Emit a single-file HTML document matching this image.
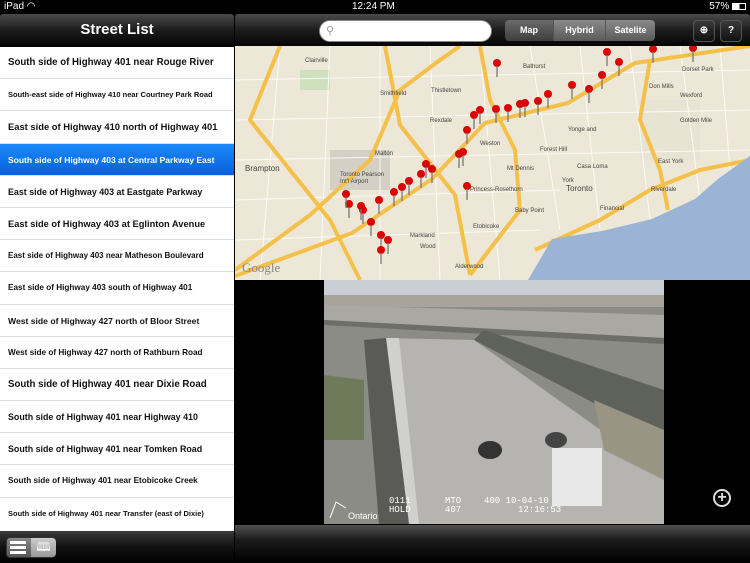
<!DOCTYPE html>
<html><head><meta charset="utf-8"><style>
*{margin:0;padding:0;box-sizing:border-box}
body{width:750px;height:563px;background:#000;position:relative;overflow:hidden;font-family:"Liberation Sans",sans-serif}
.status{position:absolute;top:0;left:0;width:750px;height:14px;background:#000;color:#fff;font-size:10px;line-height:14px}
.nav{position:absolute;top:14px;height:32px;background:linear-gradient(#4a4a4a,#1c1c1c 50%,#050505);}
.list{position:absolute;left:0;top:47px;width:234px;height:484px;background:#fff}
.row{height:32.2px;border-bottom:1px solid #ddd;font-weight:bold;color:#111;font-size:9.3px;line-height:32px;padding-left:8px;white-space:nowrap;overflow:hidden}
.row.s{font-size:7.5px}
.row.l{font-size:9.7px}
.row.sel{background:linear-gradient(#1a8af6,#0a5fe0);color:#fff}
.seg{position:absolute;top:20px;height:21px;font-size:9px;font-weight:bold;line-height:21px;text-align:center;color:#fff;background:linear-gradient(#8a8a8a,#5a5a5a)}
.btn{position:absolute;top:20px;width:22px;height:22px;border:1px solid #555;border-radius:4px;background:linear-gradient(#3a3a3a,#111);color:#fff;font-size:10px;font-weight:bold;text-align:center;line-height:20px}
</style></head><body>
<div class="status"><span style="position:absolute;left:4px">iPad &#x25E0;</span><span style="position:absolute;left:352px">12:24 PM</span><span style="position:absolute;right:4px">57% <span style="display:inline-block;width:14px;height:7px;border:1px solid #fff;vertical-align:-1px;background:linear-gradient(90deg,#fff 55%,#000 55%)"></span></span></div>
<div class="nav" style="left:0;width:234px;border-radius:3px 3px 0 0"><div style="color:#fff;font-weight:bold;font-size:15px;text-align:center;line-height:32px">Street List</div></div>
<div class="nav" style="left:235px;width:515px;border-radius:3px 3px 0 0"></div>
<div style="position:absolute;left:319px;top:20px;width:173px;height:22px;border-radius:11px;background:#fff;border:1px solid #888"><span style="position:absolute;left:6px;top:3px;color:#999;font-size:11px">&#x26B2;</span></div>
<div class="seg" style="left:505px;width:48px;border-radius:4px 0 0 4px;background:linear-gradient(#6a6a6a,#3e3e3e)">Map</div>
<div class="seg" style="left:553px;width:52px;border-left:1px solid #555">Hybrid</div>
<div class="seg" style="left:605px;width:50px;border-left:1px solid #555;border-radius:0 4px 4px 0">Satelite</div>
<div class="btn" style="left:693px">&#x2295;</div>
<div class="btn" style="left:720px">?</div>
<div class="list">
<div class="row l">South side of Highway 401 near Rouge River</div>
<div class="row s">South-east side of Highway 410 near Courtney Park Road</div>
<div class="row" style="font-size:9.4px">East side of Highway 410 north of Highway 401</div>
<div class="row sel" style="font-size:8.5px">South side of Highway 403 at Central Parkway East</div>
<div class="row" style="font-size:8.9px">East side of Highway 403 at Eastgate Parkway</div>
<div class="row" style="font-size:9.3px">East side of Highway 403 at Eglinton Avenue</div>
<div class="row" style="font-size:8px">East side of Highway 403 near Matheson Boulevard</div>
<div class="row" style="font-size:8.2px">East side of Highway 403 south of Highway 401</div>
<div class="row" style="font-size:8.6px">West side of Highway 427 north of Bloor Street</div>
<div class="row" style="font-size:8.2px">West side of Highway 427 north of Rathburn Road</div>
<div class="row l">South side of Highway 401 near Dixie Road</div>
<div class="row" style="font-size:8.9px">South side of Highway 401 near Highway 410</div>
<div class="row" style="font-size:8.9px">South side of Highway 401 near Tomken Road</div>
<div class="row" style="font-size:8.2px">South side of Highway 401 near Etobicoke Creek</div>
<div class="row" style="font-size:7.5px;border:none">South side of Highway 401 near Transfer (east of Dixie)</div>
</div>
<div style="position:absolute;left:0;top:531px;width:234px;height:32px;background:linear-gradient(#3a3a3a,#111 50%,#000)">
<div style="position:absolute;left:6px;top:6px;width:50px;height:21px;border-radius:4px;background:linear-gradient(#888,#555);border:1px solid #333"></div>
<div style="position:absolute;left:10px;top:10px;width:16px;height:3px;background:#fff;box-shadow:0 5px 0 #fff,0 10px 0 #fff"></div>
<div style="position:absolute;left:31px;top:7px;width:25px;height:19px;background:linear-gradient(#ccc,#999);border-radius:0 4px 4px 0;color:#fff;font-size:12px;text-align:center;line-height:19px">&#x1F56E;</div>
</div>
<div style="position:absolute;left:235px;top:525px;width:515px;height:38px;background:linear-gradient(#505050,#1a1a1a 40%,#000)"></div>
<svg style="position:absolute;left:235px;top:46px" width="515" height="234" viewBox="235 46 515 234">
<rect x="235" y="46" width="515" height="234" fill="#ece7d6"/>
<rect x="330" y="150" width="60" height="40" fill="#d4d0c6"/>
<rect x="300" y="70" width="30" height="20" fill="#cfe0bf"/>
<rect x="640" y="100" width="60" height="60" fill="#e8e4d4"/>
<g stroke="#fff" stroke-width="1" fill="none" opacity=".8">
<path d="M235 80L750 70M235 120L750 110M235 160L750 150M235 200L560 190M235 240L540 230M280 46L260 280M330 46L320 280M380 46L380 280M430 46L440 280M480 46L500 280M530 46L560 230M580 46L600 230M630 46L650 220M680 46L700 200M720 46L730 170"/>
</g>
<g stroke="#f5c04a" stroke-width="4" fill="none" stroke-linejoin="round">
<path d="M235 276L352 233L432 179L485 123L568 103L635 63L750 46"/>
<path d="M280 46L250 120L330 220L360 280"/>
<path d="M235 270L310 215L370 160L400 90L440 60L460 46"/>
<path d="M385 46L400 125L455 195L470 275"/>
<path d="M480 46L490 100L515 150L520 210L470 275"/>
<path d="M650 60L640 120L660 170L668 210"/>
<path d="M535 250L600 220L650 190L700 170L750 160"/>
</g>
<path d="M528 280L552 239L602 231L652 219L695 199L718 179L750 156L750 280Z" fill="#9bb3d4"/>
<g font-size="6" fill="#444" font-family="Liberation Sans">
<text x="245" y="171" font-size="8">Brampton</text><text x="566" y="191" font-size="8">Toronto</text>
<text x="305" y="62">Clairville</text><text x="380" y="95">Smithfield</text><text x="431" y="92">Thistletown</text>
<text x="430" y="122">Rexdale</text><text x="480" y="145">Weston</text><text x="375" y="155">Malton</text>
<text x="340" y="176">Toronto Pearson</text><text x="340" y="183">Int'l Airport</text><text x="470" y="191">Princess-Rosethorn</text>
<text x="515" y="212">Baby Point</text><text x="473" y="228">Etobicoke</text><text x="410" y="237">Markland</text>
<text x="420" y="248">Wood</text><text x="455" y="268">Alderwood</text><text x="540" y="151">Forest Hill</text>
<text x="568" y="131">Yonge and</text><text x="577" y="168">Casa Loma</text><text x="600" y="210">Financial</text>
<text x="649" y="88">Don Mills</text><text x="682" y="71">Dorset Park</text><text x="680" y="97">Wexford</text>
<text x="680" y="122">Golden Mile</text><text x="658" y="163">East York</text><text x="651" y="191">Riverdale</text>
<text x="523" y="68">Bathurst</text><text x="562" y="182">York</text><text x="507" y="170">Mt Dennis</text>
</g>
<text x="242" y="272" font-size="13" fill="#888" font-family="Liberation Serif">Google</text>
<g>
<g id="p" fill="#d00"><circle r="4"/><line y1="3" y2="14" stroke="#777" stroke-width="1.3"/></g>
<use href="#p" x="497" y="63"/><use href="#p" x="607" y="52"/><use href="#p" x="619" y="62"/><use href="#p" x="602" y="75"/><use href="#p" x="589" y="89"/><use href="#p" x="572" y="85"/><use href="#p" x="548" y="94"/><use href="#p" x="538" y="101"/><use href="#p" x="525" y="103"/><use href="#p" x="520" y="104"/><use href="#p" x="508" y="108"/><use href="#p" x="496" y="109"/><use href="#p" x="480" y="110"/><use href="#p" x="474" y="115"/><use href="#p" x="467" y="130"/><use href="#p" x="463" y="152"/><use href="#p" x="459" y="154"/><use href="#p" x="467" y="186"/><use href="#p" x="432" y="169"/><use href="#p" x="426" y="164"/><use href="#p" x="421" y="174"/><use href="#p" x="409" y="181"/><use href="#p" x="402" y="187"/><use href="#p" x="394" y="192"/><use href="#p" x="379" y="200"/><use href="#p" x="363" y="210"/><use href="#p" x="361" y="206"/><use href="#p" x="349" y="204"/><use href="#p" x="346" y="194"/><use href="#p" x="371" y="222"/><use href="#p" x="381" y="235"/><use href="#p" x="388" y="240"/><use href="#p" x="381" y="250"/><use href="#p" x="653" y="49"/><use href="#p" x="693" y="48"/>
</g>
</svg>
<svg style="position:absolute;left:324px;top:280px" width="340" height="244" viewBox="0 0 340 244">
<rect width="340" height="244" fill="#8c8c86"/>
<rect width="340" height="25" fill="#c9cfd4"/>
<rect y="15" width="340" height="12" fill="#a8a49c"/>
<path d="M0 25L340 35L340 58L0 40Z" fill="#a9a8a2"/>
<path d="M0 40L340 58L340 64L0 45Z" fill="#6e6e68"/>
<path d="M160 50L340 110L340 160L150 60Z" fill="#5e625a"/>
<path d="M0 95L40 100L40 160L0 160Z" fill="#6e7a5a"/>
<path d="M62 58L150 60L340 195L340 244L85 244Z" fill="#b5b4b0"/>
<path d="M62 58L75 58L95 244L85 244Z" fill="#d0d0cc"/>
<path d="M40 60L62 58L85 244L55 244Z" fill="#5a5a56"/>
<path d="M270 120L340 150L340 200L280 170Z" fill="#9a9484"/>
<rect x="228" y="168" width="50" height="58" fill="#e8e8e8"/>
<ellipse cx="166" cy="170" rx="12" ry="9" fill="#333"/>
<ellipse cx="232" cy="160" rx="11" ry="8" fill="#444"/>
<g font-family="Liberation Mono" font-size="9" fill="#fff">
<text x="65" y="223">0111</text><text x="65" y="232">HOLD</text><text x="121" y="223">MTO</text><text x="121" y="232">407</text><text x="160" y="223">400 10-04-10</text><text x="194" y="232">12:16:53</text></g>
<text x="24" y="239" font-size="9" fill="#fff" font-family="Liberation Sans">Ontario</text>
<path d="M6 238L12 222L22 228" stroke="#fff" fill="none" stroke-width="1"/>
</svg>
<div style="position:absolute;left:713px;top:489px;width:18px;height:18px;border-radius:50%;border:2px solid #ddd;color:#ddd;font-size:16px;line-height:13px;text-align:center;font-weight:bold">+</div>
</body></html>
